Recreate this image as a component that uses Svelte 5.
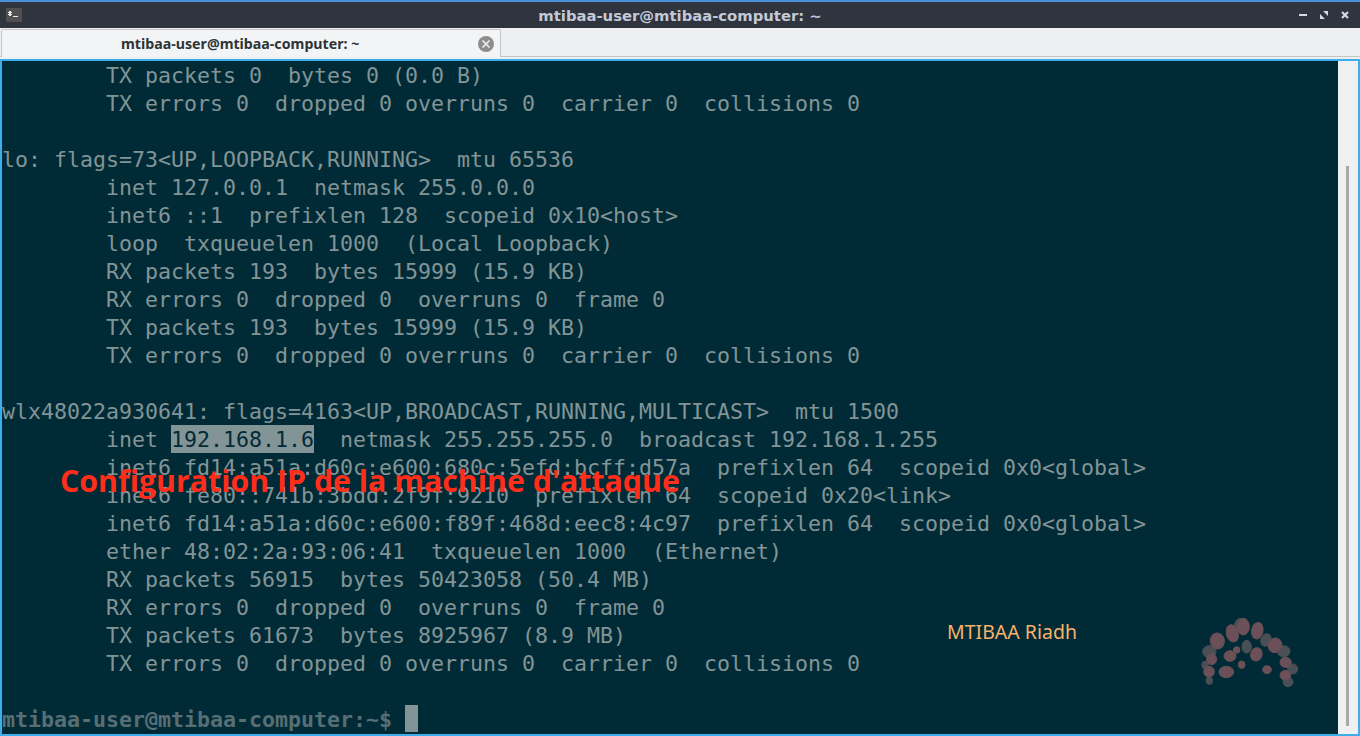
<script>
	const lines = [
		'        TX packets 0  bytes 0 (0.0 B)',
		'        TX errors 0  dropped 0 overruns 0  carrier 0  collisions 0',
		'',
		'lo: flags=73<UP,LOOPBACK,RUNNING>  mtu 65536',
		'        inet 127.0.0.1  netmask 255.0.0.0',
		'        inet6 ::1  prefixlen 128  scopeid 0x10<host>',
		'        loop  txqueuelen 1000  (Local Loopback)',
		'        RX packets 193  bytes 15999 (15.9 KB)',
		'        RX errors 0  dropped 0  overruns 0  frame 0',
		'        TX packets 193  bytes 15999 (15.9 KB)',
		'        TX errors 0  dropped 0 overruns 0  carrier 0  collisions 0',
		'',
		'wlx48022a930641: flags=4163<UP,BROADCAST,RUNNING,MULTICAST>  mtu 1500'
	];
	const after = [
		'        inet6 fd14:a51a:d60c:e600:680c:5efd:bcff:d57a  prefixlen 64  scopeid 0x0<global>',
		'        inet6 fe80::741b:3bdd:2f9f:9210  prefixlen 64  scopeid 0x20<link>',
		'        inet6 fd14:a51a:d60c:e600:f89f:468d:eec8:4c97  prefixlen 64  scopeid 0x0<global>',
		'        ether 48:02:2a:93:06:41  txqueuelen 1000  (Ethernet)',
		'        RX packets 56915  bytes 50423058 (50.4 MB)',
		'        RX errors 0  dropped 0  overruns 0  frame 0',
		'        TX packets 61673  bytes 8925967 (8.9 MB)',
		'        TX errors 0  dropped 0 overruns 0  carrier 0  collisions 0',
		''
	];

	// traced from the reference, coords are 3x
	const pink = [
		[112, 123, 21, 24, -10], [157, 100, 18, 26, -15], [190, 80, 18, 25, 0], [232, 92, 17, 25, 10],
		[285, 136, 20, 22, 20], [229, 163, 17, 20, 20], [150, 168, 18, 16, 0], [170, 150, 10, 10, 0],
		[95, 178, 15, 16, 0], [87, 215, 16, 16, 0], [139, 216, 22, 17, 0], [185, 194, 10, 11, 0],
		[261, 209, 13, 12, 0], [317, 187, 17, 15, 10], [316, 226, 16, 15, 0]
	];
	const grey = [
		[88, 155, 20, 18, 0], [200, 140, 14, 19, 0], [258, 120, 15, 19, 20], [311, 154, 19, 17, 0],
		[338, 207, 15, 15, 0], [324, 246, 15, 14, 0], [88, 242, 10, 11, 0], [75, 195, 10, 11, 0],
		[180, 76, 16, 20, 0]
	];
</script>

<div class="window">
	<header class="titlebar">
		<span class="app-icon">
			<svg width="16" height="14" viewBox="0 0 16 14">
				<rect x="0" y="0" width="16" height="14" rx="1" fill="#4f4f4f" />
				<rect x="3" y="3" width="2" height="5" fill="#e8e8e8" />
				<rect x="2" y="4" width="4" height="1" fill="#e8e8e8" />
				<rect x="2" y="6" width="4" height="1" fill="#e8e8e8" />
				<rect x="7" y="8" width="5" height="1" fill="#e8e8e8" />
			</svg>
		</span>
		<span class="title">mtibaa-user@mtibaa-computer: ~</span>
		<span class="controls">
			<svg width="8" height="8" viewBox="0 0 8 8"><rect x="0" y="3" width="8" height="2" fill="#d3dae3" /></svg>
			<svg width="8" height="8" viewBox="0 0 8 8"><path d="M0 8V3L5 8ZM3 0H8V5Z" fill="#d3dae3" /></svg>
			<svg width="8" height="8" viewBox="0 0 8 8"><path d="M1 1L7 7M7 1L1 7" stroke="#d3dae3" stroke-width="2.2" /></svg>
		</span>
	</header>

	<nav class="tabbar">
		<div class="tab">
			<span class="tab-label">mtibaa-user@mtibaa-computer: ~</span>
			<span class="tab-close">
				<svg width="16" height="16" viewBox="0 0 16 16">
					<circle cx="8" cy="8" r="8" fill="#8e8e8e" />
					<path d="M4.5 4.5L11.5 11.5M11.5 4.5L4.5 11.5" stroke="#f2f2f2" stroke-width="1.6" />
				</svg>
			</span>
		</div>
	</nav>

	<main class="body">
		<div class="terminal">
			{#each lines as line}
				<div class="row">{line}</div>
			{/each}
			<div class="row">{'        inet '}<span class="selected">192.168.1.6</span>{'  netmask 255.255.255.0  broadcast 192.168.1.255'}</div>
			{#each after as line}
				<div class="row">{line}</div>
			{/each}
			<div class="row prompt">{'mtibaa-user@mtibaa-computer:~$ '}<span class="cursor"></span></div>

			<div class="caption">Configuration IP de la machine d'attaque</div>
			<div class="signature">MTIBAA Riadh</div>
			<svg class="logo" width="180" height="136" viewBox="0 0 540 408">
				{#each grey as [cx, cy, rx, ry, a]}
					<ellipse {cx} {cy} {rx} {ry} fill="#4a4f55" stroke="#4a4f55" stroke-width="3" transform="rotate({a} {cx} {cy})" />
				{/each}
				{#each pink as [cx, cy, rx, ry, a]}
					<ellipse {cx} {cy} {rx} {ry} fill="#6b5057" stroke="#6b5057" stroke-width="3" transform="rotate({a} {cx} {cy})" />
				{/each}
			</svg>
		</div>
		<aside class="scrollbar"><div class="thumb"></div></aside>
	</main>
</div>

<style>
	:global(body) {
		margin: 0;
		overflow: hidden;
	}

	.window {
		width: 1360px;
		height: 736px;
		display: flex;
		flex-direction: column;
		background: #eeeff1;
	}

	.titlebar {
		height: 26px;
		flex: none;
		border-top: 2px solid #4a90d9;
		background: #2f343f;
		display: flex;
		align-items: center;
		padding: 0 11px;
	}

	.app-icon,
	.controls {
		flex: 1 1 0;
		display: flex;
	}

	.app-icon svg {
		margin-left: -5px;
	}

	.title {
		font: bold 14.8px "DejaVu Sans", sans-serif;
		color: #c3cad6;
	}

	.controls {
		justify-content: flex-end;
		gap: 13px;
	}

	.tabbar {
		height: 29px;
		flex: none;
		margin-bottom: 2px;
		background: #eeeff1;
		box-sizing: border-box;
		border-bottom: 1px solid #c6c6c6;
		padding: 1px 0 0 1px;
		display: flex;
	}

	.tab {
		width: 500px;
		height: 28px;
		box-sizing: border-box;
		background: #f3f4f6;
		border: 1px solid #c6c6c6;
		border-bottom: none;
		border-radius: 2px 2px 0 0;
		display: flex;
		align-items: center;
		padding: 0 6px 0 119px;
	}

	.tab-label {
		font: bold 14.2px "Noto Sans", sans-serif;
		color: #2e3436;
		flex: 1;
	}

	.tab-close {
		display: flex;
	}

	.body {
		flex: 1;
		display: flex;
		min-height: 0;
		border: 2px solid #3daee9;
	}

	.terminal {
		flex: 1;
		background: #002b36;
		color: #839496;
		font-family: "DejaVu Sans Mono", monospace;
		font-size: 21.6px;
		position: relative;
		overflow: hidden;
		margin-left: -2px;
		border-left: 2px solid #3daee9;
	}

	/* line-height above the 28px cell puts the glyphs where VTE draws them */
	.row {
		height: 28px;
		line-height: 30px;
		white-space: pre;
	}

	.selected {
		display: inline-block;
		height: 28px;
		vertical-align: top;
		background: #839496;
		color: #002b36;
	}

	.prompt {
		color: #586e75;
		font-weight: bold;
	}

	.cursor {
		display: inline-block;
		width: 13px;
		height: 27px;
		background: #839496;
		vertical-align: top;
	}

	.caption {
		position: absolute;
		left: 58px;
		top: 399px;
		font: bold 30.3px "Open Sans", sans-serif;
		color: #ff2d1a;
		white-space: nowrap;
	}

	.signature {
		position: absolute;
		left: 945px;
		top: 557px;
		font: 19.5px "Noto Sans", sans-serif;
		color: #f6b26b;
		white-space: nowrap;
	}

	.logo {
		position: absolute;
		left: 1178px;
		top: 539px;
		filter: blur(0.6px);
	}

	.scrollbar {
		width: 20px;
		flex: none;
		background: #eff0f2;
		position: relative;
	}

	.thumb {
		position: absolute;
		left: 8px;
		top: 105px;
		bottom: 8px;
		width: 3px;
		background: #a8a8a8;
	}
</style>
